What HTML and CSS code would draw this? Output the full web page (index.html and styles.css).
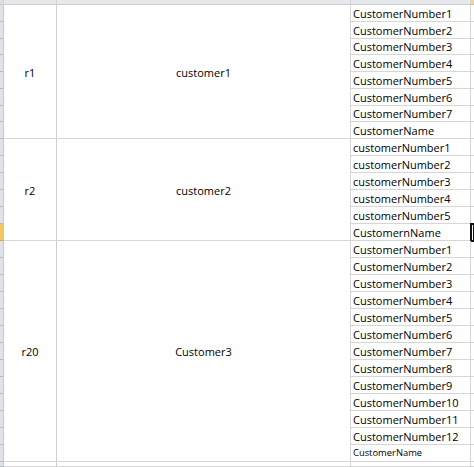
FILE: index.html
```html
<!DOCTYPE html>
<html>
<head>
<meta charset="utf-8">
<link rel="stylesheet" href="styles.css">
</head>
<body>
<div class="sheet">
  <div class="ch corner"></div><div class="ch ca"></div><div class="ch cb"></div><div class="ch cc"></div><div class="ch cx sel"></div>

  <div class="rh"></div><div class="cell a span-8">r1</div><div class="cell b span-8">customer1</div><div class="cell c">CustomerNumber1</div><div class="cell x"></div>
  <div class="rh"></div><div class="cell c">CustomerNumber2</div><div class="cell x"></div>
  <div class="rh"></div><div class="cell c">CustomerNumber3</div><div class="cell x"></div>
  <div class="rh"></div><div class="cell c">CustomerNumber4</div><div class="cell x"></div>
  <div class="rh"></div><div class="cell c">CustomerNumber5</div><div class="cell x"></div>
  <div class="rh"></div><div class="cell c">CustomerNumber6</div><div class="cell x"></div>
  <div class="rh"></div><div class="cell c">CustomerNumber7</div><div class="cell x"></div>
  <div class="rh"></div><div class="cell c">CustomerName</div><div class="cell x"></div>

  <div class="rh"></div><div class="cell a span-6">r2</div><div class="cell b span-6">customer2</div><div class="cell c">customerNumber1</div><div class="cell x"></div>
  <div class="rh"></div><div class="cell c">customerNumber2</div><div class="cell x"></div>
  <div class="rh"></div><div class="cell c">customerNumber3</div><div class="cell x"></div>
  <div class="rh"></div><div class="cell c">customerNumber4</div><div class="cell x"></div>
  <div class="rh"></div><div class="cell c">customerNumber5</div><div class="cell x"></div>
  <div class="rh sel"></div><div class="cell c">CustomernName</div><div class="cell x active"></div>

  <div class="rh"></div><div class="cell a span-13">r20</div><div class="cell b span-13">Customer3</div><div class="cell c">CustomerNumber1</div><div class="cell x"></div>
  <div class="rh"></div><div class="cell c">CustomerNumber2</div><div class="cell x"></div>
  <div class="rh"></div><div class="cell c">CustomerNumber3</div><div class="cell x"></div>
  <div class="rh"></div><div class="cell c">CustomerNumber4</div><div class="cell x"></div>
  <div class="rh"></div><div class="cell c">CustomerNumber5</div><div class="cell x"></div>
  <div class="rh"></div><div class="cell c">CustomerNumber6</div><div class="cell x"></div>
  <div class="rh"></div><div class="cell c">CustomerNumber7</div><div class="cell x"></div>
  <div class="rh"></div><div class="cell c">CustomerNumber8</div><div class="cell x"></div>
  <div class="rh"></div><div class="cell c">CustomerNumber9</div><div class="cell x"></div>
  <div class="rh"></div><div class="cell c">CustomerNumber10</div><div class="cell x"></div>
  <div class="rh"></div><div class="cell c">CustomerNumber11</div><div class="cell x"></div>
  <div class="rh"></div><div class="cell c">CustomerNumber12</div><div class="cell x"></div>
  <div class="rh"></div><div class="cell c small">CustomerName</div><div class="cell x"></div>

  <div class="rh"></div><div class="cell a"></div><div class="cell b"></div><div class="cell c"></div><div class="cell x"></div>
</div>
</body>
</html>
```

FILE: styles.css
```css
* { box-sizing: border-box; }
html, body { margin: 0; padding: 0; background: #fff; }
body { width: 474px; height: 467px; overflow: hidden; }

.sheet {
  display: grid;
  grid-template-columns: 4px 53px 294px 120px 1fr;
  grid-template-rows: 5px repeat(8, 16.75px) repeat(19, 17px) 1fr;
  height: 467px;
  font-family: "Open Sans", "Noto Sans", sans-serif;
  font-size: 11px;
  color: #000;
}

.ch {
  grid-row: 1;
  background: #e6e8ec;
  border-bottom: 1px solid #c9ccd2;
  border-right: 1px solid #d2d5da;
}
.ch.corner { grid-column: 1; background: #dcdee3; }
.ch.ca { grid-column: 2; }
.ch.cb { grid-column: 3; }
.ch.cc { grid-column: 4; }
.ch.cx { grid-column: 5; }
.ch.sel { background: #f7d88c; border-bottom-color: #e2b556; }

.rh {
  grid-column: 1;
  background: #e1e2e8;
  border-right: 1px solid #c7c9d1;
  border-bottom: 1px solid #b9bcc6;
}
.rh.sel { background: #f5c660; border-bottom-color: #e0a93a; }

.cell {
  border-right: 1px solid #d6d6d6;
  border-bottom: 1px solid #d6d6d6;
  white-space: nowrap;
  overflow: hidden;
}
.a { grid-column: 2; }
.b { grid-column: 3; }
.c { grid-column: 4; }
.x { grid-column: 5; border-right: none; }

.a, .b {
  display: flex;
  align-items: center;
  justify-content: center;
  padding-top: 1px;
}
.a { border-right-color: #cfcfcf; }

.span-8 { grid-row: span 8; }
.span-6 { grid-row: span 6; }
.span-13 { grid-row: span 13; }

.c {
  display: flex;
  align-items: flex-end;
  padding-left: 2px;
  line-height: 15px;
}
.c.small { font-size: 9.4px; padding-bottom: 1px; }

.x.active {
  outline: 2px solid #111;
  outline-offset: -1px;
  background: #fff;
}
```
